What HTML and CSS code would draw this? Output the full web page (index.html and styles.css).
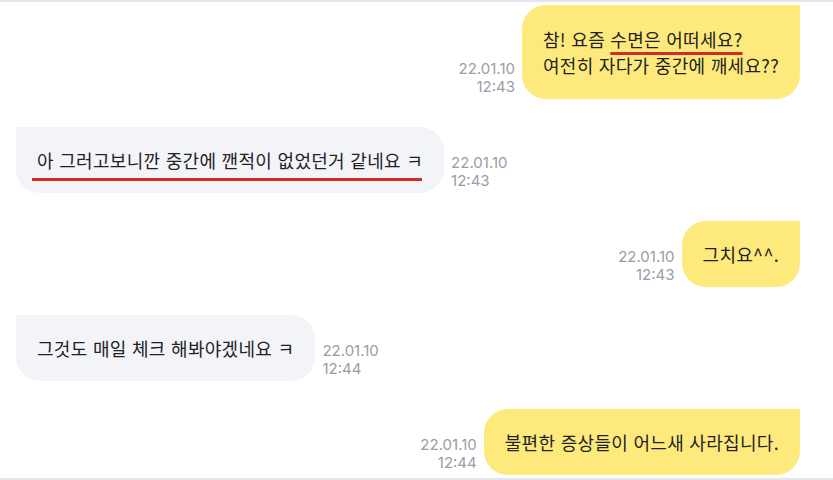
FILE: index.html
```html
<!DOCTYPE html>
<html lang="ko">
<head>
  <meta charset="UTF-8" />
  <meta name="viewport" content="width=device-width, initial-scale=1.0"/>
  <title>상담 대화</title>
  <link rel="stylesheet" href="styles.css">
</head>
<body>

  <div class="chat">
    <div class="row me">
      <div class="time">22.01.10<br>12:43</div>
      <div class="bubble two">참! 요즘 <span class="mark">수면은 어떠세요?</span><br>여전히 자다가 중간에 깨세요??</div>
    </div>

    <div class="row you">
      <div class="bubble underline">아 그러고보니깐 중간에 깬적이 없었던거 같네요 ㅋ</div>
      <div class="time">22.01.10<br>12:43</div>
    </div>

    <div class="row me">
      <div class="time">22.01.10<br>12:43</div>
      <div class="bubble">그치요^^.</div>
    </div>

    <div class="row you">
      <div class="bubble">그것도 매일 체크 해봐야겠네요 ㅋ</div>
      <div class="time">22.01.10<br>12:44</div>
    </div>

    <div class="row me">
      <div class="time">22.01.10<br>12:44</div>
      <div class="bubble">불편한 증상들이 어느새 사라집니다.</div>
    </div>
  </div>

</body>
</html>
```

FILE: styles.css
```css
body {
  margin: 0;
  background: white;
  font-family: 'Noto Sans CJK KR', 'Noto Sans', sans-serif;
  color: #222;
}

.chat {
  height: 480px;
  box-sizing: border-box;
  border-top: 2px solid #e6e6ea;
  border-bottom: 2px solid #e6e6ea;
  padding: 3px 33px 0 16px;
  display: flex;
  flex-direction: column;
  gap: 28px;
  overflow: hidden;
}

.row {
  display: flex;
  align-items: flex-end;
  gap: 7px;
}

.row.me {
  justify-content: flex-end;
}

.bubble {
  position: relative;
  font-size: 18px;
  letter-spacing: 0.3px;
  line-height: 26px;
  padding: 20px 21px;
  border-radius: 24px;
}

.bubble.two {
  padding: 21px;
}

.row.me .bubble {
  background: #feea7c;
  border-top-right-radius: 0;
}

.row.you .bubble {
  background: #f3f4f8;
  border-top-left-radius: 0;
}

.mark {
  text-decoration: underline;
  text-decoration-color: #d42a2a;
  text-decoration-thickness: 3px;
  text-underline-offset: 5px;
}

.underline::after {
  content: "";
  position: absolute;
  left: 16px;
  right: 22px;
  bottom: 12px;
  height: 3px;
  background: #d42a2a;
}

.time {
  font-family: 'Inter', sans-serif;
  font-size: 15px;
  line-height: 18px;
  color: #9c9ca6;
  padding-bottom: 3px;
}

.row.me .time {
  text-align: right;
}
```
